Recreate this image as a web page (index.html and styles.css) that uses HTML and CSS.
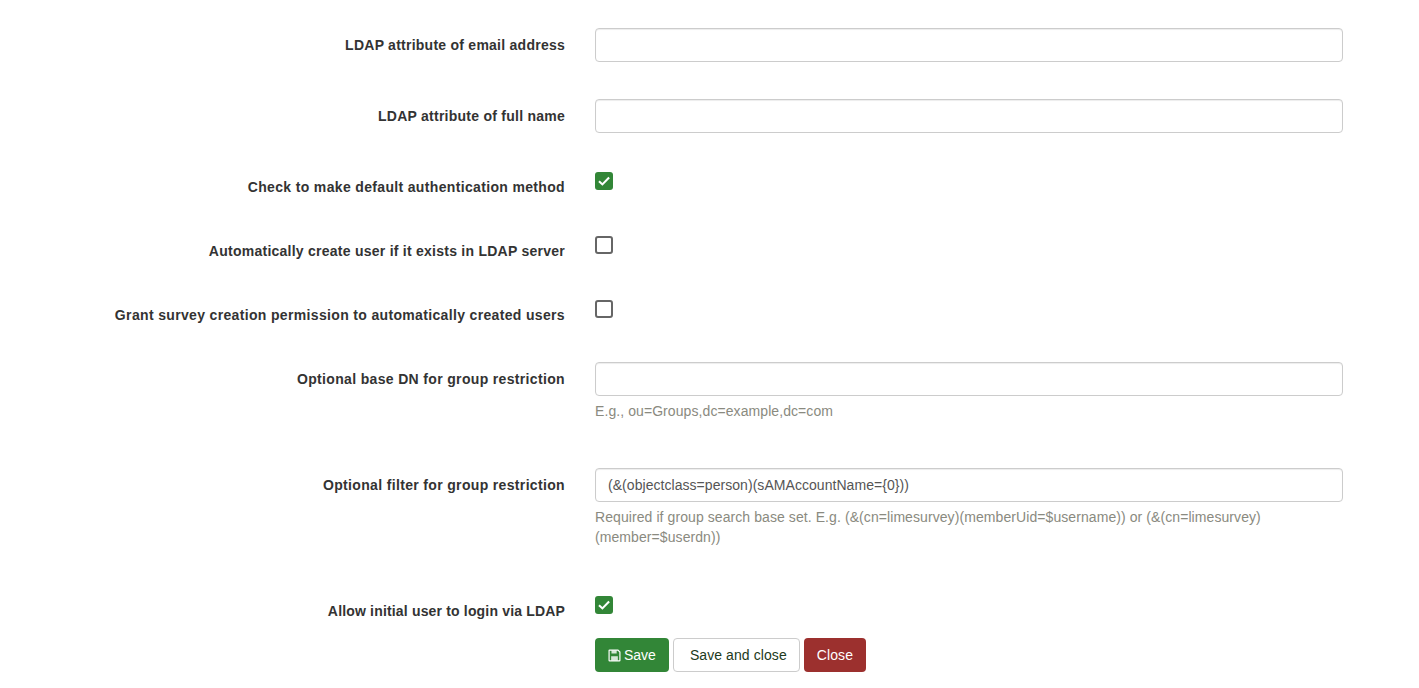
FILE: index.html
```html
<!DOCTYPE html>
<html lang="en">
<head>
<meta charset="utf-8">
<title>LDAP settings</title>
<link rel="stylesheet" href="styles.css">
</head>
<body>
<form class="form">
  <div class="row"><label class="label mid">LDAP attribute of email address</label><div class="field"><input class="input" type="text"></div></div>
  <div class="row"><label class="label mid">LDAP attribute of full name</label><div class="field"><input class="input" type="text"></div></div>
  <div class="row"><label class="label">Check to make default authentication method</label><div class="field check-field"><span class="check on"><svg viewBox="0 0 18 18" width="18" height="18"><path d="M4 9.200l3.400 3.200 6.700-6.800" fill="none" stroke="#fff" stroke-width="2.100"/></svg></span></div></div>
  <div class="row"><label class="label mid">Automatically create user if it exists in LDAP server</label><div class="field check-field"><span class="check"></span></div></div>
  <div class="row"><label class="label">Grant survey creation permission to automatically created users</label><div class="field check-field"><span class="check"></span></div></div>
  <div class="row"><label class="label">Optional base DN for group restriction</label><div class="field"><input class="input" type="text"><p class="help">E.g., ou=Groups,dc=example,dc=com</p></div></div>
  <div class="row"><label class="label">Optional filter for group restriction</label><div class="field"><input class="input" type="text" value="(&amp;(objectclass=person)(sAMAccountName={0}))"><p class="help">Required if group search base set. E.g. (&amp;(cn=limesurvey)(memberUid=$username)) or (&amp;(cn=limesurvey)(member=$userdn))</p></div></div>
  <div class="row last"><label class="label low">Allow initial user to login via LDAP</label><div class="field check-field"><span class="check on"><svg viewBox="0 0 18 18" width="18" height="18"><path d="M4 9.200l3.400 3.200 6.700-6.800" fill="none" stroke="#fff" stroke-width="2.100"/></svg></span></div></div>
  <div class="actions">
    <button class="btn green" type="button"><svg class="save-icon" viewBox="0 0 12 12" width="13" height="13"><path d="M1.500 1h7.700L11 2.800V10.500a.5.5 0 0 1-.5.5h-9a.5.5 0 0 1-.5-.5v-9a.5.5 0 0 1 .5-.5z" fill="none" stroke="#fff" stroke-width="1.100"/><path d="M3.200 1.200h4.800v3H3.200zM2.900 6.600h6.200v4.200H2.900z" fill="#fff" fill-opacity=".8"/></svg>Save</button>
    <button class="btn white" type="button">Save and close</button>
    <button class="btn red" type="button">Close</button>
  </div>
</form>
</body>
</html>
```
FILE: styles.css
```css
* { box-sizing: border-box; }
html, body { margin: 0; padding: 0; background: #fff; }
body { font-family: "Liberation Sans", Arial, sans-serif; font-size: 14px; line-height: 20px; color: #333; }
.form { padding-top: 28px; width: 1343px; }
.row { display: grid; grid-template-columns: 565px 748px; column-gap: 30px; margin-bottom: 37px; }
.row.last { margin-bottom: 17px; }
.label { font-weight: 700; text-align: right; padding-top: 7px; color: #333; letter-spacing: .34px; }
.label.mid { letter-spacing: .25px; }
.label.low { letter-spacing: .17px; }
.input { display: block; width: 100%; height: 34px; padding: 6px 12px; border: 1px solid #ccc; border-radius: 4px; font: inherit; letter-spacing: .05px; color: #555; background: #fff; box-shadow: inset 0 1px 1px rgba(0,0,0,.075); }
.help { margin: 5px 0 10px; color: #8a8a80; letter-spacing: .08px; }
.check-field { height: 27px; padding-top: 2px; }
.check { display: block; width: 18px; height: 18px; border: 2px solid #666; border-radius: 3px; background: #fff; }
.check.on { background: #328637; border: 0; }
.check svg { display: block; }
.actions { display: flex; gap: 4px; margin-left: 595px; padding-bottom: 16px; }
.btn { height: 34px; padding: 6px 12px; border: 1px solid transparent; border-radius: 4px; font: inherit; display: inline-flex; align-items: center; }
.green { background: #328637; color: #fff; }
.white { background: #fff; color: #1d3a20; border-color: #ccc; padding: 6px 12px 6px 16px; letter-spacing: .08px; }
.red { background: #9c302e; color: #fff; letter-spacing: .1px; }
.save-icon { margin-right: 3px; }
```
